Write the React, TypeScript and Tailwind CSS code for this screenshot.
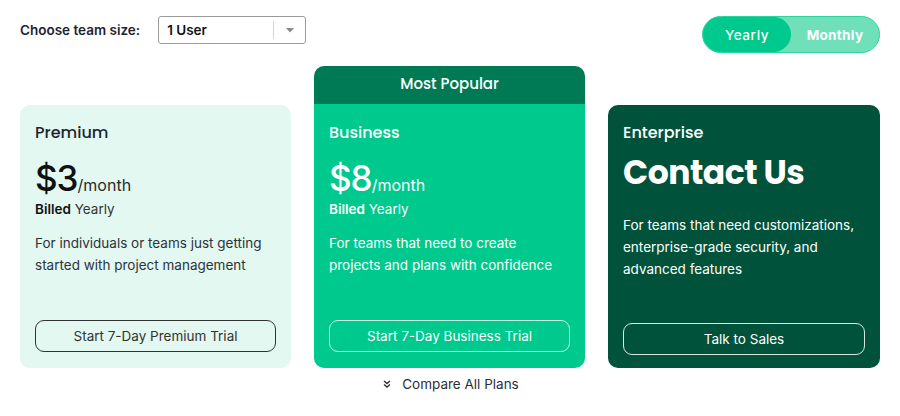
import React from "react";

const heading = { fontFamily: "Poppins, 'Open Sans', Inter, sans-serif" };

export default function App() {
  return (
    <div className="w-[900px] h-[416px] bg-white text-[#1c2430]" style={{ fontFamily: "Inter, 'Noto Sans', sans-serif" }}>
      <div className="flex items-start justify-between pl-[20px] pr-[20px] pt-[16px]">
        <div className="flex h-[28px] items-center gap-[18px]">
          <span className="text-[13.5px] font-semibold text-[#1c2430]">Choose team size:</span>
          <div className="flex h-[28px] w-[148px] items-center rounded-[3px] border border-[#9a9a9a] bg-white">
            <span className="flex-1 pl-[8px] text-[13.5px] font-semibold text-[#111]">1 User</span>
            <span className="h-[18px] w-px bg-[#d4d4d4]"></span>
            <span className="flex w-[31px] justify-center">
              <svg width="8" height="5" viewBox="0 0 8 5"><path d="M0 0h8L4 4.5z" fill="#888" /></svg>
            </span>
          </div>
        </div>
        <div className="flex h-[37px] w-[178px] items-center rounded-full border border-[#2fd39d] bg-[#6fe0ba]">
          <div className="flex h-full w-[88px] items-center justify-center rounded-full bg-[#00c98d] pt-[1px] text-[13.5px] font-medium tracking-[0.6px] text-white">Yearly</div>
          <div className="flex flex-1 items-center justify-center pt-[1px] text-[13.5px] font-bold tracking-[0.3px] text-white">Monthly</div>
        </div>
      </div>

      <div className="mt-[13px] flex items-end gap-[23px] px-[20px]">
        {/* Premium */}
        <div className="flex h-[263px] w-[271px] flex-col rounded-[10px] bg-[#e2f8f0] px-[15px] pb-[16px] pt-[16px]">
          <div className="text-[16px] font-medium text-[#1c2430]" style={heading}>Premium</div>
          <div className="mt-[13px] flex items-baseline">
            <span className="text-[35px] font-medium leading-[40px] tracking-[-1px] text-[#111]">$3</span>
            <span className="text-[16px] text-[#2a2a2a]">/month</span>
          </div>
          <div className="mt-[2px] text-[13.5px] leading-[18px] text-[#333]"><span className="font-semibold text-[#111]">Billed</span> Yearly</div>
          <p className="mt-[14px] text-[13.5px] leading-[22px] text-[#2d333a]">For individuals or teams just getting started with project management</p>
          <button className="mt-auto h-[32px] w-full rounded-[9px] border border-[#333] text-[13.5px] text-[#333]">Start 7-Day Premium Trial</button>
        </div>

        {/* Business */}
        <div className="flex w-[271px] flex-col">
          <div className="flex h-[38px] items-center justify-center rounded-t-[10px] bg-[#007a54] pb-[1px] text-[15px] font-medium text-white" style={heading}>Most Popular</div>
          <div className="flex h-[264px] flex-col rounded-b-[10px] bg-[#00c98d] px-[15px] pb-[16px] pt-[17px] text-white">
            <div className="text-[16px] font-medium" style={heading}>Business</div>
            <div className="mt-[13px] flex items-baseline">
              <span className="text-[35px] font-medium leading-[40px] tracking-[-1px]">$8</span>
              <span className="text-[16px]">/month</span>
            </div>
            <div className="mt-[2px] text-[13.5px] leading-[18px]"><span className="font-semibold">Billed</span> Yearly</div>
            <p className="mt-[14px] text-[13.5px] leading-[22px]">For teams that need to create projects and plans with confidence</p>
            <button className="mt-auto h-[32px] w-full rounded-[9px] border border-[#c7f2e2] text-[13.5px] text-white">Start 7-Day Business Trial</button>
          </div>
        </div>

        {/* Enterprise */}
        <div className="flex h-[263px] w-[272px] flex-col rounded-[10px] bg-[#00533a] px-[15px] pb-[13px] pt-[16px] text-white">
          <div className="text-[16px] font-medium" style={heading}>Enterprise</div>
          <div className="mt-[8px] text-[33px] font-bold leading-[40px] tracking-[-0.5px]" style={heading}>Contact Us</div>
          <p className="mt-[21px] text-[13.5px] leading-[22px]">For teams that need customizations, enterprise-grade security, and advanced features</p>
          <button className="mt-auto h-[32px] w-full rounded-[9px] border border-[#d9e7e0] text-[13.5px] text-white">Talk to Sales</button>
        </div>
      </div>

      <div className="mt-[6px] flex items-center justify-center gap-[11px] pl-[2px] text-[13.5px] text-[#2a2f36]">
        <svg width="8" height="8" viewBox="0 0 8 8" fill="none" stroke="#333" strokeWidth="1.4"><path d="M1 1l3 2.5L7 1M1 4.5l3 2.5 3-2.5" /></svg>
        <span>Compare All Plans</span>
      </div>
    </div>
  );
}
